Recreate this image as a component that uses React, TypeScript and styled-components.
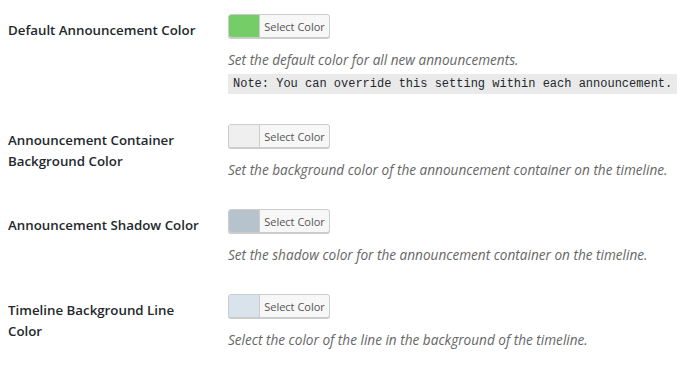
import { ReactElement } from 'react';
import styled, { createGlobalStyle } from 'styled-components';

const GlobalStyle = createGlobalStyle`
    html, body {
        margin: 0;
        padding: 0;
        background: #ffffff;
    }
    body {
        font-family: 'Open Sans', 'Noto Sans', sans-serif;
        color: #23282d;
    }
`;

const FormTable = styled.div`
    display: flex;
    flex-direction: column;
    padding: 0 0 0 8px;
    margin-top: -1px;
`;

const Row = styled.div`
    display: flex;
    align-items: flex-start;
`;

const Label = styled.div`
    width: 200px;
    padding: 21px 10px 20px 0;
    font-size: 13.3px;
    font-weight: 600;
    line-height: 21px;
    color: #23282d;
`;

const Field = styled.div`
    display: flex;
    flex-direction: column;
    align-items: flex-start;
    padding: 15px 10px;
`;

const ColorButton = styled.button`
    box-sizing: border-box;
    display: flex;
    align-items: stretch;
    height: 24px;
    width: 102px;
    padding: 0;
    margin: 0 6px 6px 0;
    border: 1px solid #cccccc;
    border-radius: 3px;
    background: #f7f7f7;
    box-shadow: 0 1px 0 #cccccc;
    overflow: hidden;
    cursor: pointer;
`;

const Swatch = styled.span<{ $color: string }>`
    flex: 0 0 30px;
    background: ${(p) => p.$color};
    border-right: 1px solid #cccccc;
`;

const ButtonText = styled.span`
    flex: 1;
    display: flex;
    align-items: center;
    justify-content: center;
    white-space: nowrap;
    font-family: 'Open Sans', sans-serif;
    font-size: 11px;
    color: #555555;
`;

const Description = styled.p`
    margin: 6px 0 0;
    font-size: 13.6px;
    font-style: italic;
    line-height: 19px;
    color: #666666;
`;

const Note = styled.code`
    display: block;
    margin-top: 5px;
    padding: 3px 5px 2px;
    background: #eaeaea;
    font-family: 'Liberation Mono', monospace;
    font-size: 12px;
    line-height: 15px;
    color: #23282d;
`;

interface Setting {
    label: string;
    color: string;
    description: string;
    note?: string;
}

const settings: Setting[] = [
    {
        label: 'Default Announcement Color',
        color: '#75cd68',
        description: 'Set the default color for all new announcements.',
        note: 'Note: You can override this setting within each announcement.',
    },
    {
        label: 'Announcement Container Background Color',
        color: '#efefef',
        description: 'Set the background color of the announcement container on the timeline.',
    },
    {
        label: 'Announcement Shadow Color',
        color: '#b7c3cc',
        description: 'Set the shadow color for the announcement container on the timeline.',
    },
    {
        label: 'Timeline Background Line Color',
        color: '#d8e3ec',
        description: 'Select the color of the line in the background of the timeline.',
    },
];

const App = (): ReactElement => {
    return (
        <>
            <GlobalStyle />
            <FormTable>
                {settings.map((s, index) => (
                    <Row key={`setting-${index}`}>
                        <Label>{s.label}</Label>
                        <Field>
                            <ColorButton type="button">
                                <Swatch $color={s.color} />
                                <ButtonText>Select Color</ButtonText>
                            </ColorButton>
                            <Description>{s.description}</Description>
                            {s.note && <Note>{s.note}</Note>}
                        </Field>
                    </Row>
                ))}
            </FormTable>
        </>
    );
};

export default App;
